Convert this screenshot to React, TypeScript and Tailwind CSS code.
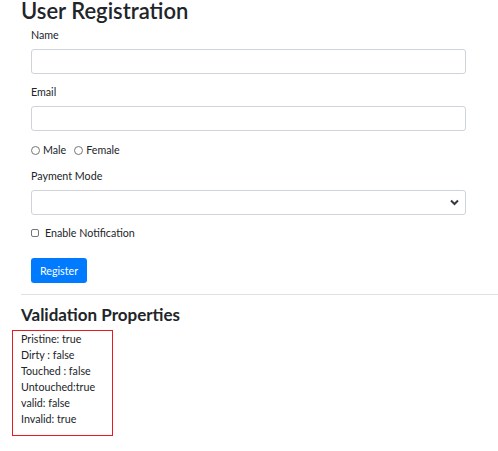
import React from "react";

export default function App() {
  const props = [
    "Pristine: true",
    "Dirty : false",
    "Touched : false",
    "Untouched:true",
    "valid: false",
    "Invalid: true",
  ];
  return (
    <div className="w-[498px] h-[451px] overflow-hidden bg-white text-[#212529] font-['Lato',sans-serif] text-[10.7px]">
      <h2 className="pl-[21px] text-[22px] leading-[22px] mt-0 font-semibold">User Registration</h2>
      <form className="pl-[31px] pr-[32px] pt-[5px]">
        <label className="block leading-[16px] mb-[6px]">Name</label>
        <div className="h-[25px] border border-[#ced4da] rounded-[3px]" />
        <label className="block leading-[16px] mt-[10px] mb-[6px]">Email</label>
        <div className="h-[25px] border border-[#ced4da] rounded-[3px]" />
        <div className="flex items-center h-[16px] mt-[11px]">
          <span className="w-[9px] h-[9px] rounded-full border border-[#767676]" />
          <span className="ml-[3px]">Male</span>
          <span className="ml-[8px] w-[9px] h-[9px] rounded-full border border-[#767676]" />
          <span className="ml-[3px]">Female</span>
        </div>
        <label className="block leading-[16px] mt-[10px] mb-[6px]">Payment Mode</label>
        <div className="h-[25px] border border-[#ced4da] rounded-[3px] flex items-center justify-end pr-[6px]">
          <svg width="9" height="7" viewBox="0 0 9 7">
            <path d="M1 1.5 L4.5 5 L8 1.5" fill="none" stroke="#343a40" strokeWidth="2" />
          </svg>
        </div>
        <div className="flex items-center h-[16px] mt-[10px]">
          <span className="w-[8px] h-[8px] rounded-[2px] border border-[#767676]" />
          <span className="ml-[6px]">Enable Notification</span>
        </div>
        <button
          type="button"
          className="block mt-[17px] h-[25px] w-[56px] bg-[#007bff] text-white rounded-[3px] text-[10.7px] leading-[25px]"
        >
          Register
        </button>
      </form>
      <div className="ml-[21px] mt-[11px] border-t border-[#e1e1e1]" />
      <h4 className="pl-[21px] mt-[10px] text-[17px] leading-[20px] font-bold">Validation Properties</h4>
      <div className="ml-[12px] mt-[5px] w-[101px] h-[106px] border border-[#e8191f] pl-[8px]">
        {props.map((p) => (
          <div key={p} className="leading-[16px]">{p}</div>
        ))}
      </div>
    </div>
  );
}
